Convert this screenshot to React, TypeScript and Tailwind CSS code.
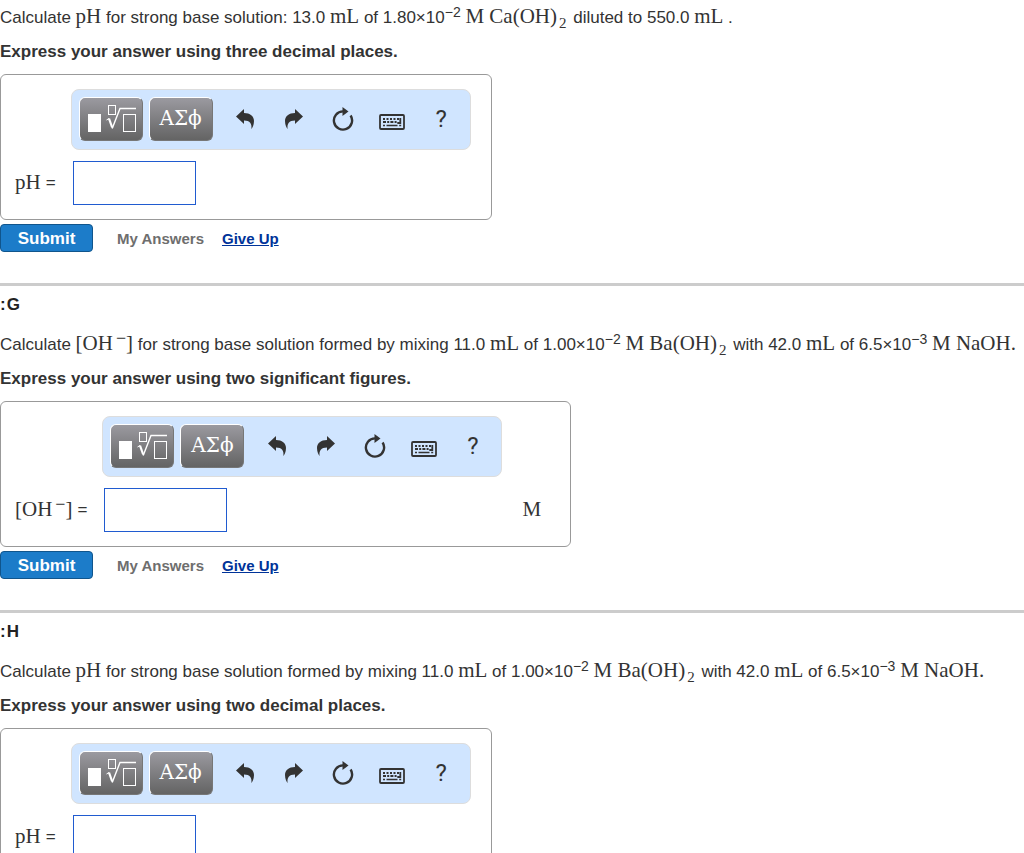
import { useState } from 'react'
import type { ReactNode } from 'react'

function Tex({ children }: { children: ReactNode }) {
  return <span className="font-['Liberation_Serif',serif] text-[21px]">{children}</span>
}

function Exp({ children }: { children: ReactNode }) {
  return <span className="align-[6px] text-[14px] leading-none">{children}</span>
}

function Sub({ children }: { children: ReactNode }) {
  return <span className="mx-0.5 align-[-5px] text-[15px] leading-none">{children}</span>
}

function Hydroxide() {
  return (
    <Tex>
      [OH<span className="ml-[3px] align-[6px] text-[18px] leading-none">−</span>]
    </Tex>
  )
}

function TemplatesIcon() {
  return (
    <svg width="50" height="30" viewBox="0 0 50 30" fill="none" stroke="#fff" aria-hidden="true">
      <rect x="2" y="10" width="13" height="18" fill="#fff" stroke="none" />
      <rect x="22.5" y="1.5" width="7" height="9" />
      <path d="M20.500 16l2.500-1.500" />
      <path d="M23 14.500l3.200 9" strokeWidth="2.200" />
      <path d="M26.200 24.500L34 4.500h16" strokeWidth="1.400" />
      <rect x="37.500" y="10.500" width="12" height="17" />
    </svg>
  )
}

function ArrowIcon({ flip }: { flip?: boolean }) {
  return (
    <svg width="18" height="20" viewBox="0 0 18 20" fill="#333" aria-hidden="true" className={flip ? '-scale-x-100' : ''}>
      <path d="M0 7.500L8 0v4c6 0 10 3 10 8 0 4-1.500 6.500-2.600 8 .6-5.500-1.400-8.500-7.400-8.500V15z" />
    </svg>
  )
}

function ResetIcon() {
  return (
    <svg width="22" height="24" viewBox="0 0 22 24" fill="none" aria-hidden="true">
      <path d="M18.600 8.500A9.100 9.100 0 1 1 11 4.400" stroke="#333" strokeWidth="2.400" />
      <path d="M10.500 0l6 4.500-6 4.500z" fill="#333" />
    </svg>
  )
}

function KeyboardIcon() {
  return (
    <svg width="26" height="16" viewBox="0 0 26 16" fill="none" stroke="#333" aria-hidden="true">
      <rect x="1" y="1" width="24" height="14" rx="1" strokeWidth="1.800" />
      <path d="M4 5h16" strokeWidth="1.800" strokeDasharray="2 1.500" />
      <path d="M4 8h14" strokeWidth="1.800" strokeDasharray="3 1.200 2 1.200" />
      <path d="M21.300 4v5h-3" strokeWidth="1.800" />
      <path d="M4 11.500h2M7.500 11.500h11M20.200 11.500h2" strokeWidth="1.600" />
    </svg>
  )
}

const darkButton =
  'flex h-11 w-16 items-center justify-center rounded-md border border-t-white border-l-white border-r-[#777] border-b-[#777] bg-linear-to-b from-[#9b9aa0] to-[#646464] text-white'

function Toolbar() {
  const tools = [
    { label: 'Undo', icon: <ArrowIcon /> },
    { label: 'Redo', icon: <ArrowIcon flip /> },
    { label: 'Reset', icon: <ResetIcon /> },
    { label: 'Keyboard shortcuts', icon: <span className="pt-1.5"><KeyboardIcon /></span> },
    { label: 'Help', icon: <span className="font-[Roboto,sans-serif] text-[24px]">?</span> },
  ]
  return (
    <div className="flex h-[61px] items-center rounded-lg border border-[#ddd] bg-[#d0e5ff] pb-px pl-[7px] pr-1">
      <button aria-label="Templates" className={darkButton}><TemplatesIcon /></button>
      <button aria-label="Symbols" className={`${darkButton} ml-1.5 mr-2 pb-0.5 font-['DejaVu_Serif',serif] text-[20px]`}>ΑΣϕ</button>
      {tools.map(tool => (
        <button key={tool.label} aria-label={tool.label} className="flex h-11 w-[49px] items-center justify-center text-[#333]">
          {tool.icon}
        </button>
      ))}
    </div>
  )
}

interface PartProps {
  id: string
  name?: string
  question: ReactNode
  instruction: string
  label: ReactNode
  unit?: string
}

function Part({ id, name, question, instruction, label, unit }: PartProps) {
  const [answer, setAnswer] = useState('')

  return (
    <section>
      {name && (
        <h2 className="mb-[11px] flex gap-px border-t-[3px] border-[#ccc] pt-2 font-bold leading-[22px] text-[#222]">
          <span>:</span>
          <span>{name}</span>
        </h2>
      )}
      <p className="h-8 whitespace-nowrap leading-8">{question}</p>
      <p className="mt-2 font-bold leading-6">{instruction}</p>

      {/* Answer box */}
      <div className={`mt-2.5 flex h-[146px] w-fit items-end rounded-md border border-[#999] pb-3.5 pl-3.5 ${unit ? 'pr-[29px]' : 'pr-5'}`}>
        <label htmlFor={id} className="mr-[15px] flex h-11 items-center gap-[5px] whitespace-nowrap">
          {label} <span>=</span>
        </label>
        <div>
          <Toolbar />
          <input
            id={id}
            value={answer}
            onChange={e => setAnswer(e.target.value)}
            className="ml-0.5 mt-[11px] block h-11 w-[123px] border border-[#205bd0] bg-white px-2 focus:outline-none"
          />
        </div>
        {unit && <span className="ml-5 flex h-11 items-center"><Tex>{unit}</Tex></span>}
      </div>

      <div className="mb-[31px] mt-1 flex h-7 items-center text-[15px] font-bold">
        <button className="h-7 w-[93px] rounded border border-[#10558c] bg-[#1c7cc9] pt-0.5 text-[17px] leading-6 text-white">Submit</button>
        <span className="ml-6 pt-0.5 text-[#6e6e6e]">My Answers</span>
        <a href="#" className="ml-[18px] pt-0.5 text-[#003399] underline">Give Up</a>
      </div>
    </section>
  )
}

export default function App() {
  return (
    <main className="h-screen overflow-hidden bg-white font-['Liberation_Sans',sans-serif] text-[17px] text-[#333]">
      <Part
        id="part-f"
        question={
          <>
            Calculate <Tex>pH</Tex> for strong base solution: 13.0 <Tex>mL</Tex> of 1.80×10<Exp>−2</Exp>{' '}
            <Tex>M Ca(OH)<Sub>2</Sub></Tex> diluted to 550.0 <Tex>mL</Tex> .
          </>
        }
        instruction="Express your answer using three decimal places."
        label={<Tex>pH</Tex>}
      />
      <Part
        id="part-g"
        name="G"
        question={
          <>
            Calculate <Hydroxide /> for strong base solution formed by mixing 11.0 <Tex>mL</Tex> of 1.00×10<Exp>−2</Exp>{' '}
            <Tex>M Ba(OH)<Sub>2</Sub></Tex> with 42.0 <Tex>mL</Tex> of 6.5×10<Exp>−3</Exp> <Tex>M NaOH.</Tex>
          </>
        }
        instruction="Express your answer using two significant figures."
        label={<Hydroxide />}
        unit="M"
      />
      <Part
        id="part-h"
        name="H"
        question={
          <>
            Calculate <Tex>pH</Tex> for strong base solution formed by mixing 11.0 <Tex>mL</Tex> of 1.00×10<Exp>−2</Exp>{' '}
            <Tex>M Ba(OH)<Sub>2</Sub></Tex> with 42.0 <Tex>mL</Tex> of 6.5×10<Exp>−3</Exp> <Tex>M NaOH.</Tex>
          </>
        }
        instruction="Express your answer using two decimal places."
        label={<Tex>pH</Tex>}
      />
    </main>
  )
}
